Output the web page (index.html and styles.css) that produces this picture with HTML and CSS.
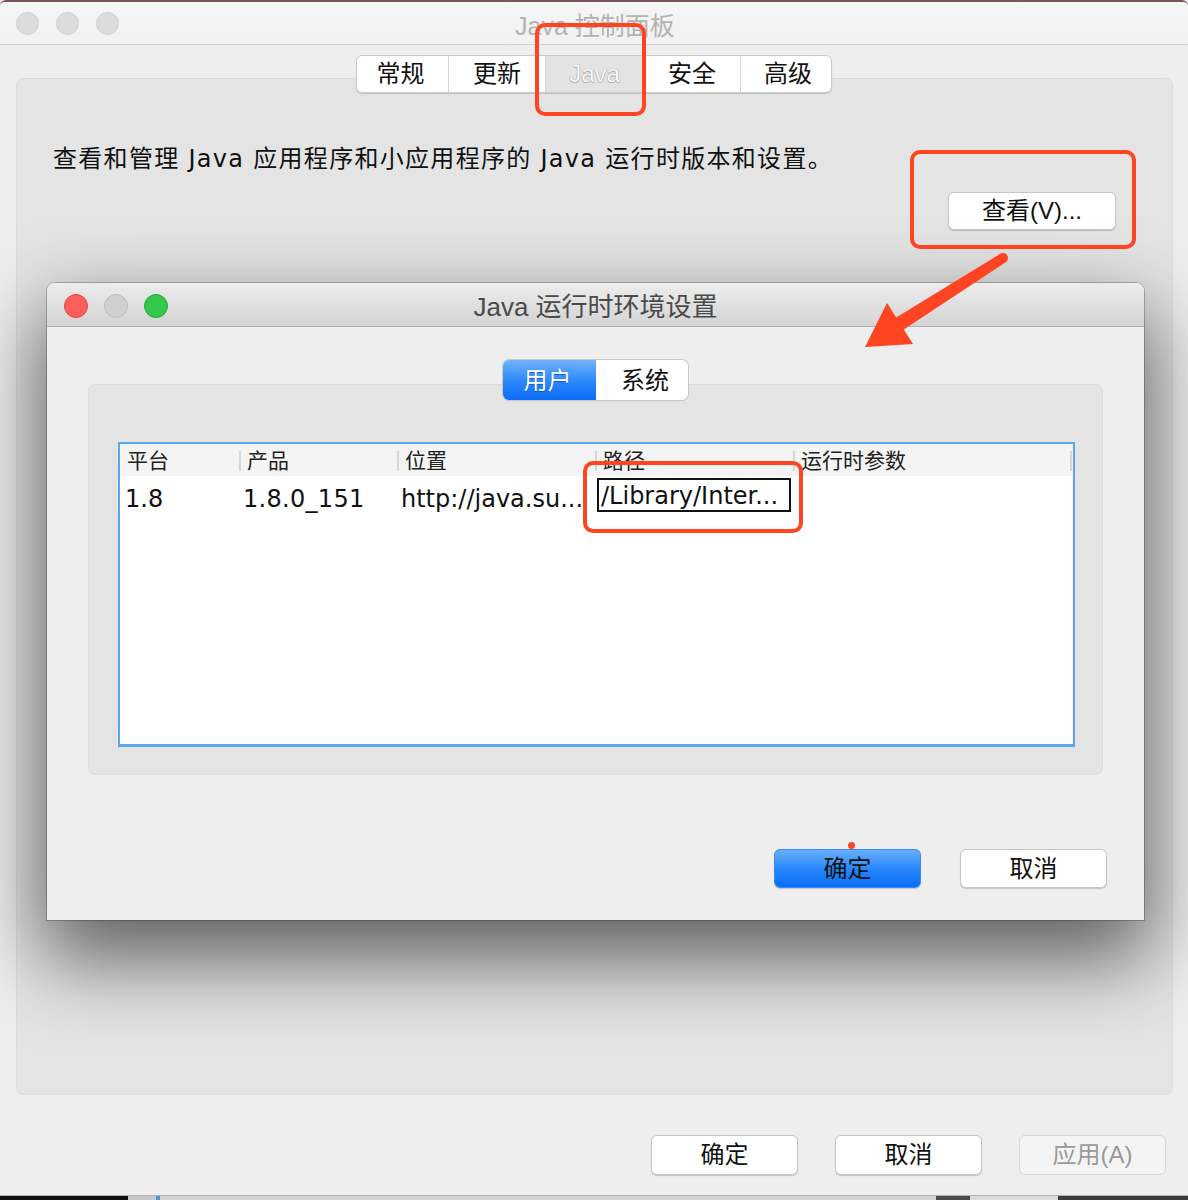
FILE: index.html
```html
<!DOCTYPE html>
<html lang="zh-CN">
<head>
<meta charset="utf-8">
<title>Java 控制面板</title>
<link rel="stylesheet" href="styles.css">
</head>
<body>
<div class="win">
  <div class="titlebar">
    <div class="lights">
      <span class="light off"></span>
      <span class="light off"></span>
      <span class="light off"></span>
    </div>
    <div class="win-title">Java 控制面板</div>
  </div>

  <div class="main">
    <div class="tabs">
      <div class="tab t1">常规</div>
      <div class="tab t2">更新</div>
      <div class="tab t3 selected">Java</div>
      <div class="tab t4">安全</div>
      <div class="tab t5">高级</div>
    </div>
    <div class="group">
      <p class="desc">查看和管理 Java 应用程序和小应用程序的 Java 运行时版本和设置。</p>
      <div class="view-row"><button class="btn view-btn">查看(V)...</button></div>
    </div>
    <div class="footer">
      <button class="btn fbtn">确定</button>
      <button class="btn fbtn">取消</button>
      <button class="btn fbtn disabled">应用(A)</button>
    </div>
  </div>

  <div class="dialog">
    <div class="dlg-titlebar">
      <div class="lights dlg-lights">
        <span class="light red"></span>
        <span class="light gray"></span>
        <span class="light green"></span>
      </div>
      <div class="dlg-title">Java 运行时环境设置</div>
    </div>
    <div class="dlg-body">
      <div class="seg">
        <div class="seg-item active">用户</div>
        <div class="seg-item">系统</div>
      </div>
      <div class="dlg-group">
        <div class="table">
          <div class="thead">
            <div class="th">平台</div>
            <div class="th"><span class="sep"></span>产品</div>
            <div class="th"><span class="sep"></span>位置</div>
            <div class="th"><span class="sep"></span>路径</div>
            <div class="th"><span class="sep"></span>运行时参数</div>
            <div class="th"><span class="sep"></span></div>
          </div>
          <div class="trow">
            <div class="td c1">1.8</div>
            <div class="td c2">1.8.0_151</div>
            <div class="td c3">http://java.su...</div>
            <div class="td c4"><span class="edit">/Library/Inter...</span></div>
            <div class="td"></div>
            <div class="td"></div>
          </div>
        </div>
      </div>
      <div class="dlg-footer">
        <button class="btn dbtn primary">确定</button>
        <button class="btn dbtn">取消</button>
      </div>
    </div>
  </div>

  <div class="mark mark-java"></div>
  <div class="mark mark-view"></div>
  <div class="mark mark-path"></div>
  <div class="mark-dot"></div>
  <svg class="arrow" viewBox="850 240 170 120" width="170" height="120">
    <path d="M1000.3 253.8 L896.2 317.6 L887 303 L865 347 L913 344 L903.8 329.4 L1005.7 262.2 Z" fill="#ff4422"/>
    <circle cx="1003" cy="258" r="5" fill="#ff4422"/>
  </svg>
</div>
<div class="strip">
  <span class="s1"></span><span class="s2"></span><span class="s3"></span><span class="s4"></span><span class="s5"></span><span class="s6"></span><span class="s7"></span>
</div>
</body>
</html>
```

FILE: styles.css
```css
* { box-sizing: border-box; }
html, body { margin: 0; padding: 0; }
body {
  width: 1188px;
  height: 1200px;
  overflow: hidden;
  background: #ececec;
  font-family: "Liberation Sans", "Noto Sans CJK SC", sans-serif;
  color: #111;
}

.win {
  position: relative;
  height: 1196px;
  background: #eeeeee;
  border-top: 2px solid #7a5456;
  border-radius: 6px 6px 0 0;
  border-bottom: 1px solid #b4b4b4;
}

.titlebar {
  position: relative;
  height: 43px;
  background: linear-gradient(#f6f6f6, #f1f1f1);
  border-bottom: 1px solid #d3d3d3;
  border-radius: 5px 5px 0 0;
  display: flex;
  align-items: center;
  justify-content: center;
}
.lights {
  position: absolute;
  left: 16px;
  top: 10px;
  display: flex;
  gap: 17px;
}
.light {
  width: 23px;
  height: 23px;
  border-radius: 50%;
  display: block;
}
.light.off { background: #dcdcdc; border: 1px solid #d0d0d0; }
.win-title {
  font-size: 25px;
  line-height: 30px;
  color: #b3b3b3;
  margin-top: 5px;
  margin-left: 2px;
}

.main { display: flex; flex-direction: column; }

.tabs {
  position: relative;
  z-index: 1;
  align-self: center;
  margin-top: 10px;
  display: flex;
  height: 38px;
  background: #fff;
  border: 1px solid #c9c9c9;
  border-radius: 6px;
  box-shadow: 0 1px 1px rgba(0,0,0,0.15);
  overflow: hidden;
}
.tab {
  display: flex;
  align-items: center;
  justify-content: center;
  font-size: 24px;
  line-height: 30px;
  color: #111;
  border-left: 1px solid #d6d6d6;
}
.tab.t1 { width: 91px; border-left: none; padding-right: 4px; }
.tab.t2 { width: 97px; }
.tab.t3 { width: 98px; }
.tab.t4 { width: 97px; }
.tab.t5 { width: 91px; padding-left: 4px; }
.tab.selected {
  background: #e3e3e3;
  color: #fafafa;
  text-shadow: 0 0 1px rgba(0,0,0,0.45), 0 1px 1px rgba(0,0,0,0.2);
}

.group {
  margin: -15px 15px 0 16px;
  height: 1017px;
  background: #e4e4e4;
  border: 1px solid #dcdcdc;
  border-radius: 7px;
  padding: 64px 56px 0 36px;
}
.desc {
  margin: 0;
  font-family: "DejaVu Sans", "Noto Sans CJK SC", sans-serif;
  font-size: 24px;
  letter-spacing: 1.3px;
  line-height: 32px;
  color: #111;
}
.view-row {
  display: flex;
  justify-content: flex-end;
  margin-top: 17px;
}

.btn {
  font-family: "Liberation Sans", "Noto Sans CJK SC", sans-serif;
  font-size: 24px;
  line-height: 30px;
  color: #111;
  background: #fff;
  border: 1px solid #c6c6c6;
  border-radius: 6px;
  box-shadow: 0 1px 1px rgba(0,0,0,0.18);
  padding: 0;
  display: flex;
  align-items: center;
  justify-content: center;
}
.view-btn { width: 168px; height: 38px; }

.footer {
  display: flex;
  justify-content: flex-end;
  gap: 37px;
  margin-top: 40px;
  padding-right: 22px;
}
.fbtn { width: 147px; height: 40px; }
.fbtn.disabled {
  background: #f4f4f4;
  color: #9a9a9a;
  border-color: #d6d6d6;
  box-shadow: none;
}

/* dialog window */
.dialog {
  position: absolute;
  left: 47px;
  top: 281px;
  width: 1097px;
  height: 637px;
  background: #eeeeee;
  border-radius: 8px 8px 0 0;
  box-shadow: 0 0 0 1px rgba(0,0,0,0.22), 0 34px 80px 6px rgba(0,0,0,0.58);
  z-index: 5;
  display: flex;
  flex-direction: column;
}
.dlg-titlebar {
  position: relative;
  height: 44px;
  background: linear-gradient(#ededed, #d4d4d4);
  border-bottom: 1px solid #b3b3b3;
  border-radius: 8px 8px 0 0;
  display: flex;
  align-items: center;
  justify-content: center;
}
.dlg-lights { left: 17px; top: 11px; gap: 16px; }
.dlg-lights .light { width: 24px; height: 24px; }
.light.red { background: #fc605c; border: 1px solid #e0443e; }
.light.gray { background: #d0d0d0; border: 1px solid #bcbcbc; }
.light.green { background: #34c84a; border: 1px solid #24a833; }
.dlg-title {
  font-size: 26px;
  line-height: 30px;
  color: #4a4a4a;
  margin-top: 4px;
}

.dlg-body {
  display: flex;
  flex-direction: column;
}
.seg {
  position: relative;
  z-index: 1;
  align-self: center;
  margin-top: 33px;
  height: 40px;
  display: flex;
  border-radius: 6px;
  background: #fff;
  box-shadow: 0 0 0 1px #c9c9c9, 0 1px 1px rgba(0,0,0,0.2);
  overflow: hidden;
}
.seg-item {
  display: flex;
  align-items: center;
  justify-content: center;
  font-size: 24px;
  line-height: 30px;
  color: #111;
  width: 92px;
  padding-top: 2px;
}
.seg-item:not(.active) { padding-left: 6px; }
.seg-item.active {
  width: 93px;
  color: #fff;
  background: linear-gradient(#6fb4fa, #2b87fb 55%, #0a6cf9);
  text-shadow: 0 1px 1px rgba(0,40,120,0.5);
  padding-right: 4px;
}

.dlg-group {
  margin: -16px 41px 0 41px;
  height: 391px;
  background: #e4e4e4;
  border: 1px solid #dcdcdc;
  border-radius: 7px;
  padding: 57px 27px 0 29px;
}
.table {
  height: 305px;
  background: #fff;
  border: 2px solid #5aa8ea;
  border-bottom-width: 3px;
  font-family: "DejaVu Sans", "Noto Sans CJK SC", sans-serif;
}
.thead, .trow {
  display: grid;
  grid-template-columns: 119px 158px 198px 198px 277px 1fr;
}
.thead {
  height: 32px;
  background: #f4f4f4;
}
.th {
  display: flex;
  align-items: center;
  font-family: "Liberation Sans", "Noto Sans CJK SC", sans-serif;
  font-size: 21px;
  line-height: 28px;
  color: #222;
  padding-left: 7px;
  padding-top: 2px;
}
.th:not(:first-child) { padding-left: 0; }
.sep {
  width: 2px;
  height: 20px;
  background: #d6d6d6;
  margin-right: 6px;
  flex: none;
}
.trow { height: 42px; }
.td {
  display: flex;
  align-items: center;
  font-size: 24px;
  line-height: 30px;
  color: #111;
  white-space: nowrap;
  padding-top: 4px;
}
.td.c1 { padding-left: 5px; }
.td.c2 { padding-left: 4px; letter-spacing: 0.3px; }
.td.c3 { padding-left: 4px; }
.td.c4 { padding: 2px 2px 0 2px; align-items: flex-start; }
.edit {
  width: 100%;
  height: 34px;
  border: 2px solid #111;
  padding-left: 2px;
  padding-top: 2px;
  display: flex;
  align-items: center;
}

.dlg-footer {
  display: flex;
  justify-content: flex-end;
  gap: 39px;
  margin-top: 74px;
  padding-right: 37px;
}
.dbtn { width: 147px; height: 39px; }
.dbtn.primary {
  background: linear-gradient(#67aefa, #2484fb 55%, #0a6df8);
  border-color: #3a8cf2;
  color: #111;
}

/* annotations */
.mark {
  position: absolute;
  border: 4px solid #ff4422;
  border-radius: 10px;
  z-index: 10;
}
.mark-java { left: 535px; top: 21px; width: 111px; height: 93px; }
.mark-view { left: 910px; top: 148px; width: 226px; height: 99px; }
.mark-path { left: 583px; top: 459px; width: 220px; height: 72px; }
.mark-dot {
  position: absolute;
  left: 848px;
  top: 840px;
  width: 7px;
  height: 7px;
  border-radius: 50%;
  background: #ff4422;
  z-index: 10;
}
.arrow {
  position: absolute;
  left: 850px;
  top: 238px;
  z-index: 10;
}

.strip {
  display: flex;
  height: 4px;
  background: #cfcfcf;
}
.strip span { display: block; height: 4px; }
.s1 { width: 128px; background: #101010; }
.s2 { width: 28px; background: #c8c8c8; }
.s3 { width: 4px; background: #5a8fd0; }
.s4 { width: 776px; background: #d4d4d4; }
.s5 { width: 34px; background: #4a4a4a; }
.s6 { width: 88px; background: #dadada; }
.s7 { flex: 1; background: #3c3c3c; }
```
